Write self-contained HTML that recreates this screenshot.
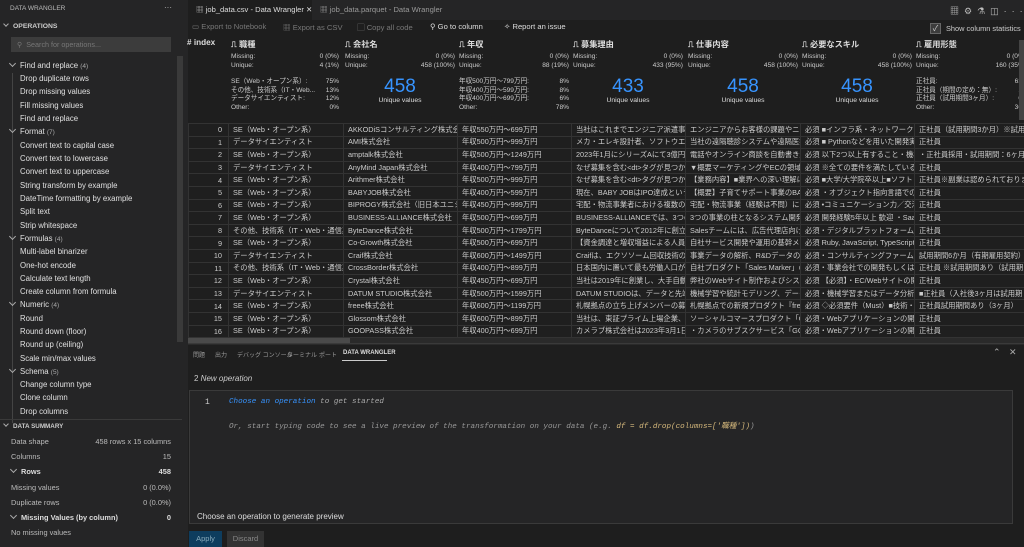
<!DOCTYPE html>
<html><head><meta charset="utf-8"><style>
*{box-sizing:border-box;margin:0;padding:0}
body{width:1024px;height:547px;overflow:hidden;background:#1e1e1e;font-family:"Liberation Sans","Noto Sans CJK JP",sans-serif;color:#ccc;position:relative}
.a{position:absolute;white-space:nowrap}
#side{left:0;top:0;width:188px;height:547px;background:#252526}
.si{font-size:7.8px;color:#e0e0e0;left:20px}
.sh{font-size:7.8px;color:#e0e0e0;left:10px}
.sh small{font-weight:normal;font-size:6.5px;color:#aaa}
.chev{display:inline-block;width:5px;height:5px;border-right:1px solid #aaa;border-bottom:1px solid #aaa;transform:rotate(45deg);margin:0 5px 2px 0}
.ds{font-size:7.4px;color:#bbb;left:11px;width:160px}
.ds span{float:right}
#tabs{left:188px;top:0;width:836px;height:20px;background:#252526}
.tab{top:0;height:20px;font-size:7.6px;line-height:20px;padding-left:8px}
.tb{font-size:7.6px;top:22px;color:#777}
.ch{top:38px;font-size:8.2px;font-weight:bold;color:#ddd}
.st{font-size:6.6px;color:#ccc;line-height:8.6px}
.big{font-size:19px;color:#3794ff;text-align:center;width:114px}
.uv{font-size:6.8px;color:#ddd;text-align:center;width:114px}
table{position:absolute;left:188px;top:123px;border-collapse:collapse;table-layout:fixed;width:836px}
td{height:12.6px;font-size:7.3px;color:#ccc;white-space:nowrap;overflow:hidden;border:1px solid #333;padding:0 4px;background:#1f1f1f}
td:first-child{text-align:right;padding-right:6px}
.pt{top:350px;font-size:6px;color:#999}
</style></head><body>
<div class="a" id="side">
<div class="a" style="left:10px;top:5px;font-size:6.5px;color:#bbb">DATA WRANGLER</div>
<div class="a" style="left:164px;top:3px;font-size:8px;color:#bbb">···</div>
<div class="a" style="left:4px;top:22px;font-size:6.8px;color:#ccc;font-weight:bold"><span class="chev" style="width:4px;height:4px"></span>OPERATIONS</div>
<div class="a" style="left:11px;top:37px;width:160px;height:15px;background:#3c3c3c"></div>
<div class="a" style="left:17px;top:40px;font-size:7.2px;color:#777">⚲&nbsp; Search for operations...</div>
<div class="a" style="left:177px;top:56px;width:6px;height:286px;background:#3a3a3a"></div>
<div class="a" style="left:12px;top:73px;width:1px;height:350px;background:#444"></div>
<div class="a sh" style="top:61px"><span class="chev"></span>Find and replace <small>(4)</small></div>
<div class="a si" style="top:74px">Drop duplicate rows</div>
<div class="a si" style="top:87px">Drop missing values</div>
<div class="a si" style="top:101px">Fill missing values</div>
<div class="a si" style="top:114px">Find and replace</div>
<div class="a sh" style="top:127px"><span class="chev"></span>Format <small>(7)</small></div>
<div class="a si" style="top:141px">Convert text to capital case</div>
<div class="a si" style="top:154px">Convert text to lowercase</div>
<div class="a si" style="top:167px">Convert text to uppercase</div>
<div class="a si" style="top:181px">String transform by example</div>
<div class="a si" style="top:194px">DateTime formatting by example</div>
<div class="a si" style="top:207px">Split text</div>
<div class="a si" style="top:221px">Strip whitespace</div>
<div class="a sh" style="top:234px"><span class="chev"></span>Formulas <small>(4)</small></div>
<div class="a si" style="top:247px">Multi-label binarizer</div>
<div class="a si" style="top:261px">One-hot encode</div>
<div class="a si" style="top:274px">Calculate text length</div>
<div class="a si" style="top:287px">Create column from formula</div>
<div class="a sh" style="top:300px"><span class="chev"></span>Numeric <small>(4)</small></div>
<div class="a si" style="top:314px">Round</div>
<div class="a si" style="top:327px">Round down (floor)</div>
<div class="a si" style="top:340px">Round up (ceiling)</div>
<div class="a si" style="top:354px">Scale min/max values</div>
<div class="a sh" style="top:367px"><span class="chev"></span>Schema <small>(5)</small></div>
<div class="a si" style="top:380px">Change column type</div>
<div class="a si" style="top:393px">Clone column</div>
<div class="a si" style="top:407px">Drop columns</div>
<div class="a" style="left:0;top:419px;width:182px;height:1px;background:#3a3a3a"></div>
<div class="a" style="left:4px;top:422px;font-size:6.3px;color:#ccc;font-weight:bold"><span class="chev" style="width:4px;height:4px"></span>DATA SUMMARY</div>
<div class="a ds" style="top:437px">Data shape<span>458 rows x 15 columns</span></div>
<div class="a ds" style="top:452px">Columns<span>15</span></div>
<div class="a ds" style="top:467px;color:#ddd;font-weight:bold"><span class="chev" style="float:none"></span>Rows<span>458</span></div>
<div class="a ds" style="top:483px">Missing values<span>0 (0.0%)</span></div>
<div class="a ds" style="top:498px">Duplicate rows<span>0 (0.0%)</span></div>
<div class="a ds" style="top:513px;color:#ddd;font-weight:bold"><span class="chev" style="float:none"></span>Missing Values (by column)<span>0</span></div>
<div class="a ds" style="top:528px">No missing values</div>
</div>

<div class="a" id="tabs">
<div class="a tab" style="left:0;width:124px;background:#1e1e1e;color:#ddd"><span style="color:#aaa">▦</span> job_data.csv - Data Wrangler ✕</div>
<div class="a tab" style="left:124px;width:150px;color:#999"><span>▦</span> job_data.parquet - Data Wrangler</div>
<div class="a" style="left:762px;top:4px;font-size:9px;color:#bbb;letter-spacing:5px">▦⚙⚗◫···</div>
</div>
<div class="a tb" style="left:192px">▭ Export to Notebook</div>
<div class="a tb" style="left:283px">▦ Export as CSV</div>
<div class="a tb" style="left:357px">▢ Copy all code</div>
<div class="a tb" style="left:430px;color:#ddd">⚲ Go to column</div>
<div class="a tb" style="left:504px;color:#ddd">✧ Report an issue</div>
<div class="a" style="left:930px;top:23px;width:11px;height:11px;border:1px solid #666;background:#3c3c3c;font-size:8px;line-height:9px;text-align:center;color:#ccc">✓</div>
<div class="a" style="left:946px;top:24px;font-size:7.4px;color:#ccc">Show column statistics</div>

<div class="a ch" style="left:187px"># index</div>
<div class="a ch" style="left:231px">⎍ 職種</div>
<div class="a st" style="left:231px;top:53px;width:108px">Missing:<span style="float:right">0 (0%)</span><br>Unique:<span style="float:right">4 (1%)</span></div>
<div class="a st" style="left:231px;top:78px;width:108px;line-height:8.5px">SE（Web・オープン系）:<span style="float:right">75%</span><br>その他、技術系（IT・Web...<span style="float:right">13%</span><br>データサイエンティスト:<span style="float:right">12%</span><br>Other:<span style="float:right">0%</span></div>
<div class="a ch" style="left:345px">⎍ 会社名</div>
<div class="a st" style="left:345px;top:53px;width:110px">Missing:<span style="float:right">0 (0%)</span><br>Unique:<span style="float:right">458 (100%)</span></div>
<div class="a big" style="left:343px;top:76px">458</div><div class="a uv" style="left:343px;top:97px">Unique values</div>
<div class="a ch" style="left:459px">⎍ 年収</div>
<div class="a st" style="left:459px;top:53px;width:110px">Missing:<span style="float:right">0 (0%)</span><br>Unique:<span style="float:right">88 (19%)</span></div>
<div class="a st" style="left:459px;top:78px;width:110px;line-height:8.5px">年収500万円〜799万円:<span style="float:right">8%</span><br>年収400万円〜599万円:<span style="float:right">8%</span><br>年収400万円〜699万円:<span style="float:right">6%</span><br>Other:<span style="float:right">78%</span></div>
<div class="a ch" style="left:573px">⎍ 募集理由</div>
<div class="a st" style="left:573px;top:53px;width:110px">Missing:<span style="float:right">0 (0%)</span><br>Unique:<span style="float:right">433 (95%)</span></div>
<div class="a big" style="left:571px;top:76px">433</div><div class="a uv" style="left:571px;top:97px">Unique values</div>
<div class="a ch" style="left:688px">⎍ 仕事内容</div>
<div class="a st" style="left:688px;top:53px;width:110px">Missing:<span style="float:right">0 (0%)</span><br>Unique:<span style="float:right">458 (100%)</span></div>
<div class="a big" style="left:686px;top:76px">458</div><div class="a uv" style="left:686px;top:97px">Unique values</div>
<div class="a ch" style="left:802px">⎍ 必要なスキル</div>
<div class="a st" style="left:802px;top:53px;width:110px">Missing:<span style="float:right">0 (0%)</span><br>Unique:<span style="float:right">458 (100%)</span></div>
<div class="a big" style="left:800px;top:76px">458</div><div class="a uv" style="left:800px;top:97px">Unique values</div>
<div class="a ch" style="left:916px">⎍ 雇用形態</div>
<div class="a st" style="left:916px;top:53px;width:110px">Missing:<span style="float:right">0 (0%)</span><br>Unique:<span style="float:right">160 (35%)</span></div>
<div class="a st" style="left:916px;top:78px;width:106px;line-height:8.5px">正社員:<span style="float:right">63</span><br>正社員（期間の定め：無）:<span style="float:right">1</span><br>正社員（試用期間3ヶ月）:<span style="float:right">0</span><br>Other:<span style="float:right">36</span></div>
<div class="a" style="left:1019px;top:40px;width:5px;height:80px;background:#444"></div>

<table>
<colgroup><col style="width:40px"><col style="width:115px"><col style="width:114px"><col style="width:114px"><col style="width:114px"><col style="width:115px"><col style="width:114px"><col style="width:110px"></colgroup>
<tr><td>0</td><td>SE（Web・オープン系）</td><td>AKKODiSコンサルティング株式会社</td><td>年収550万円〜699万円</td><td>当社はこれまでエンジニア派遣事業</td><td>エンジニアからお客様の課題やニー</td><td>必須 ■インフラ系・ネットワークも</td><td>正社員（試用期間3か月）※試用</td></tr>
<tr><td>1</td><td>データサイエンティスト</td><td>AMI株式会社</td><td>年収500万円〜999万円</td><td>メカ・エレキ設計者、ソフトウエア</td><td>当社の遠隔聴診システムや遠隔医療</td><td>必須 ■ Pythonなどを用いた開発実</td><td>正社員</td></tr>
<tr><td>2</td><td>SE（Web・オープン系）</td><td>amptalk株式会社</td><td>年収500万円〜1249万円</td><td>2023年1月にシリーズAにて3億円の</td><td>電話やオンライン商談を自動書き起</td><td>必須 以下2つ以上有すること・機械</td><td>・正社員採用・試用期間：6ヶ月</td></tr>
<tr><td>3</td><td>データサイエンティスト</td><td>AnyMind Japan株式会社</td><td>年収400万円〜799万円</td><td>なぜ募集を含む&lt;dt&gt;タグが見つか</td><td>▼概要マーケティングやECの領域で</td><td>必須 ※全ての要件を満たしている</td><td>正社員</td></tr>
<tr><td>4</td><td>SE（Web・オープン系）</td><td>Arithmer株式会社</td><td>年収500万円〜999万円</td><td>なぜ募集を含む&lt;dt&gt;タグが見つか</td><td>【業務内容】■業界への深い理解に</td><td>必須 ■大学/大学院卒以上■ソフト</td><td>正社員※副業は認められておりま</td></tr>
<tr><td>5</td><td>SE（Web・オープン系）</td><td>BABYJOB株式会社</td><td>年収400万円〜599万円</td><td>現在、BABY JOBはIPO達成という明</td><td>【概要】子育てサポート事業のBAB</td><td>必須 ・オブジェクト指向言語での</td><td>正社員</td></tr>
<tr><td>6</td><td>SE（Web・オープン系）</td><td>BIPROGY株式会社（旧日本ユニシス</td><td>年収450万円〜999万円</td><td>宅配・物流事業者における複数の課</td><td>宅配・物流事業（経験は不問）にお</td><td>必須 •コミュニケーション力／交渉</td><td>正社員</td></tr>
<tr><td>7</td><td>SE（Web・オープン系）</td><td>BUSINESS-ALLIANCE株式会社</td><td>年収500万円〜699万円</td><td>BUSINESS-ALLIANCEでは、3つの事</td><td>3つの事業の柱となるシステム開発</td><td>必須 開発経験5年以上 歓迎 ・SaaS</td><td>正社員</td></tr>
<tr><td>8</td><td>その他、技術系（IT・Web・通信系</td><td>ByteDance株式会社</td><td>年収500万円〜1799万円</td><td>ByteDanceについて2012年に創立さ</td><td>Salesチームには、広告代理店向け</td><td>必須・デジタルプラットフォーム、</td><td>正社員</td></tr>
<tr><td>9</td><td>SE（Web・オープン系）</td><td>Co-Growth株式会社</td><td>年収500万円〜699万円</td><td>【資金調達と増収増益による人員</td><td>自社サービス開発や運用の基幹メン</td><td>必須 Ruby, JavaScript, TypeScript, Sw</td><td>正社員</td></tr>
<tr><td>10</td><td>データサイエンティスト</td><td>Craif株式会社</td><td>年収600万円〜1499万円</td><td>Craifは、エクソソーム回収技術のパ</td><td>事業データの解析、R&amp;Dデータの解</td><td>必須・コンサルティングファーム、</td><td>試用期間6か月（有期雇用契約）</td></tr>
<tr><td>11</td><td>その他、技術系（IT・Web・通信系</td><td>CrossBorder株式会社</td><td>年収400万円〜899万円</td><td>日本国内に置いて最も労働人口が多</td><td>自社プロダクト「Sales Marker」の</td><td>必須・事業会社での開発もしくはQ</td><td>正社員 ※試用期間あり（試用期</td></tr>
<tr><td>12</td><td>SE（Web・オープン系）</td><td>Crystal株式会社</td><td>年収450万円〜699万円</td><td>当社は2019年に創業し、大手自動車</td><td>弊社のWebサイト制作およびシステ</td><td>必須 【必須】・EC/Webサイトの開</td><td>正社員</td></tr>
<tr><td>13</td><td>データサイエンティスト</td><td>DATUM STUDIO株式会社</td><td>年収500万円〜1599万円</td><td>DATUM STUDIOは、データと先端テ</td><td>機械学習や統計モデリング、データ</td><td>必須・機械学習またはデータ分析の</td><td>■正社員（入社後3ヶ月は試用期</td></tr>
<tr><td>14</td><td>SE（Web・オープン系）</td><td>freee株式会社</td><td>年収600万円〜1199万円</td><td>札幌拠点の立ち上げメンバーの募集</td><td>札幌拠点での新規プロダクト『free</td><td>必須 ◇必須要件（Must）■技術・</td><td>正社員試用期間あり（3ヶ月）</td></tr>
<tr><td>15</td><td>SE（Web・オープン系）</td><td>Glossom株式会社</td><td>年収600万円〜899万円</td><td>当社は、東証プライム上場企業、グ</td><td>ソーシャルコマースプロダクト「Q</td><td>必須・Webアプリケーションの開発</td><td>正社員</td></tr>
<tr><td>16</td><td>SE（Web・オープン系）</td><td>GOOPASS株式会社</td><td>年収400万円〜699万円</td><td>カメラブ株式会社は2023年3月1日に</td><td>・カメラのサブスクサービス「GOO</td><td>必須・Webアプリケーションの開発</td><td>正社員</td></tr>
</table>
<div class="a" style="left:188px;top:338px;width:836px;height:7px;background:#2a2a2a"></div>
<div class="a" style="left:188px;top:338px;width:162px;height:6px;background:#4a4a4a"></div>
<div class="a" style="left:188px;top:343px;width:836px;height:1px;background:#3a3a3a"></div>

<div class="a pt" style="left:193px">問題</div>
<div class="a pt" style="left:215px">出力</div>
<div class="a pt" style="left:237px">デバッグ コンソール</div>
<div class="a pt" style="left:287px">ターミナル</div>
<div class="a pt" style="left:319px">ポート</div>
<div class="a pt" style="left:343px;color:#ddd;font-weight:bold">DATA WRANGLER</div>
<div class="a" style="left:342px;top:360px;width:45px;height:1px;background:#ccc"></div>
<div class="a" style="left:993px;top:347px;font-size:9px;color:#aaa">⌃</div>
<div class="a" style="left:1009px;top:347px;font-size:9px;color:#aaa">✕</div>
<div class="a" style="left:194px;top:374px;font-size:8px;color:#ccc">2 <i>New operation</i></div>
<div class="a" style="left:189px;top:390px;width:824px;height:134px;background:#252526;border:1px solid #3a3a3a"></div>
<div class="a" style="left:205px;top:398px;font-size:8px;color:#ccc;font-family:'Liberation Mono',monospace">1</div>
<div class="a" style="left:229px;top:398px;font-size:7.6px;color:#aaa;font-style:italic;font-family:'Liberation Mono','Noto Sans CJK JP',monospace"><span style="color:#3794ff">Choose an operation</span> to get started</div>
<div class="a" style="left:229px;top:420px;font-size:7.6px;color:#999;font-style:italic;font-family:'Liberation Mono','Noto Sans CJK JP',monospace">Or, start typing code to see a live preview of the transformation on your data (e.g. <span style="color:#d7ba7d">df = df.drop(columns=['職種'])</span>)</div>
<div class="a" style="left:197px;top:512px;font-size:8px;color:#ddd">Choose an operation to generate preview</div>
<div class="a" style="left:189px;top:531px;width:33px;height:16px;background:#0e3d5e;font-size:7.5px;color:#8ab;text-align:center;line-height:16px">Apply</div>
<div class="a" style="left:227px;top:531px;width:37px;height:16px;background:#333;font-size:7.5px;color:#888;text-align:center;line-height:16px">Discard</div>
</body></html>
